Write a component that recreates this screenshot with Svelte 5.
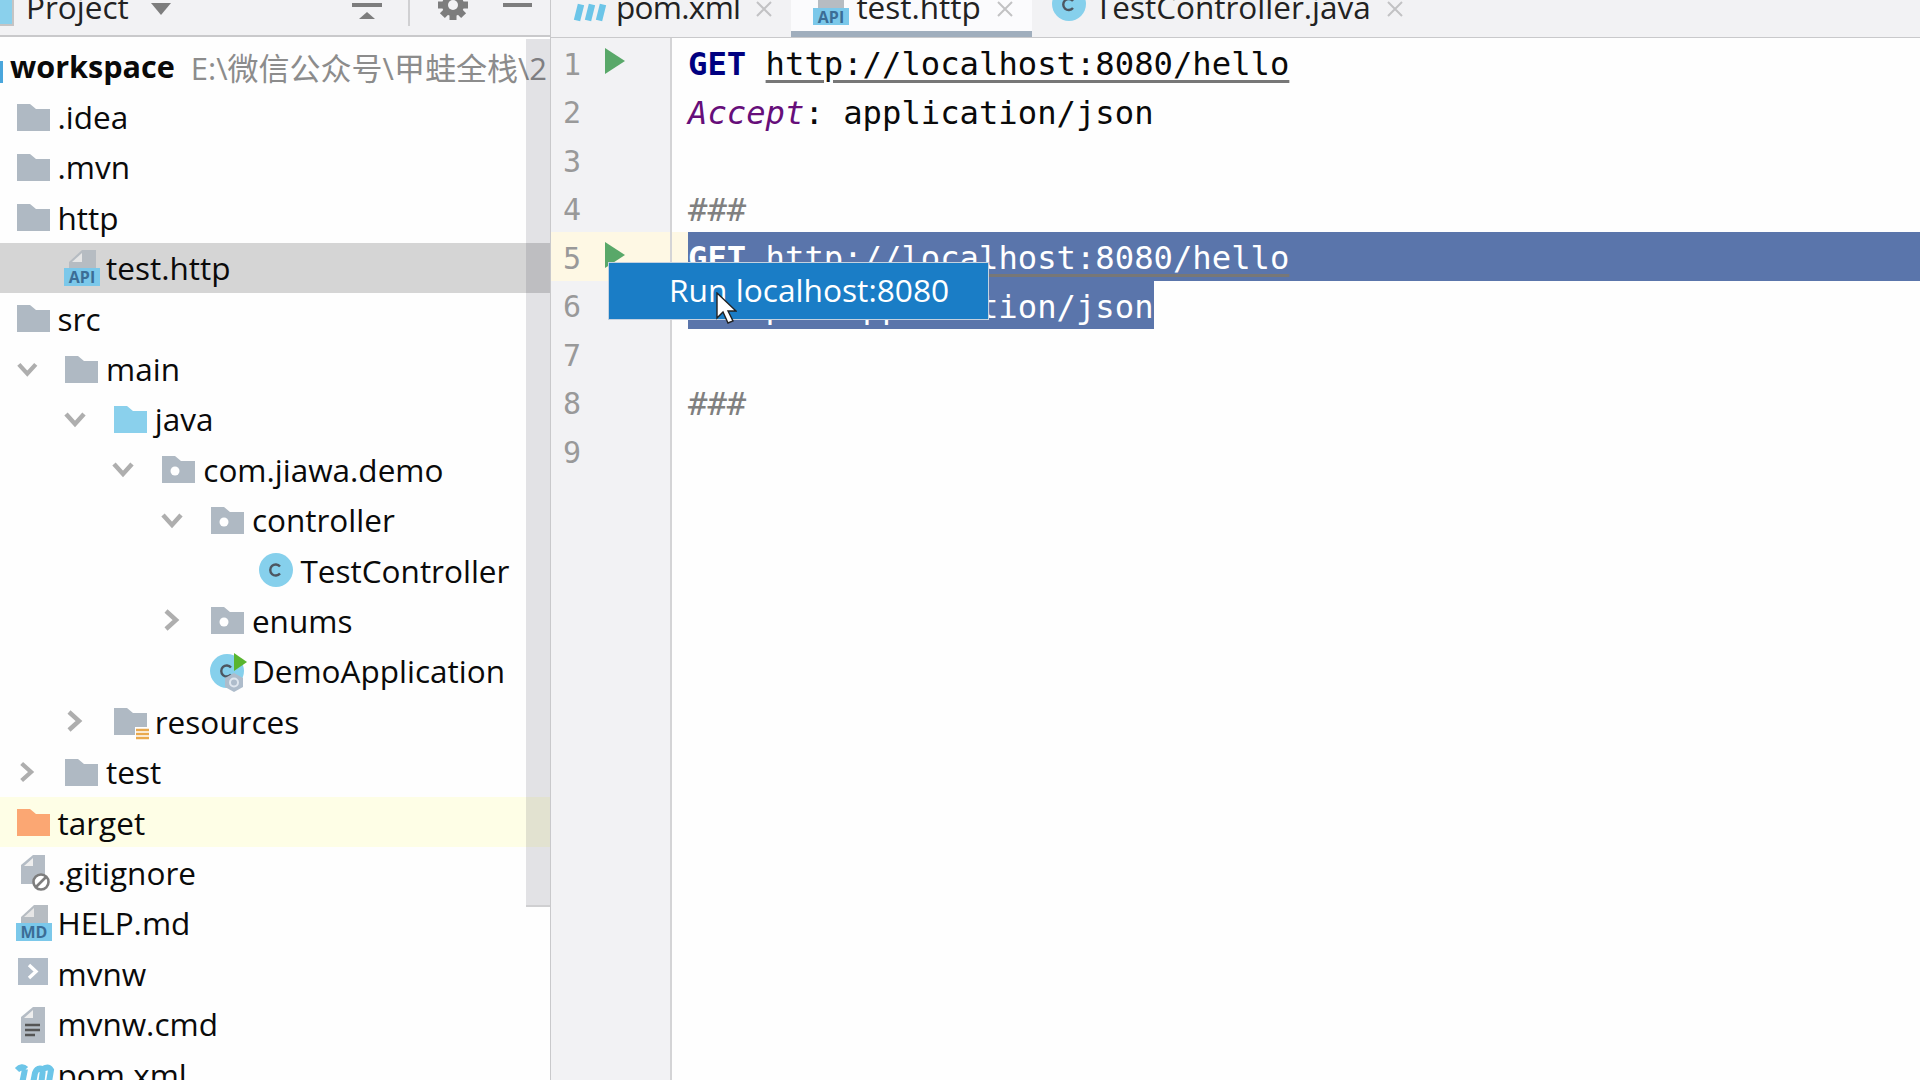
<script>
  // project tree, in display order
  const tree = [
    { name: '.idea', level: 0, icon: 'folder' },
    { name: '.mvn', level: 0, icon: 'folder' },
    { name: 'http', level: 0, icon: 'folder' },
    { name: 'test.http', level: 1, icon: 'api', selected: true },
    { name: 'src', level: 0, icon: 'folder' },
    { name: 'main', level: 1, icon: 'folder', arrow: 'down' },
    { name: 'java', level: 2, icon: 'source', arrow: 'down' },
    { name: 'com.jiawa.demo', level: 3, icon: 'package', arrow: 'down' },
    { name: 'controller', level: 4, icon: 'package', arrow: 'down' },
    { name: 'TestController', level: 5, icon: 'class' },
    { name: 'enums', level: 4, icon: 'package', arrow: 'right' },
    { name: 'DemoApplication', level: 4, icon: 'boot' },
    { name: 'resources', level: 2, icon: 'resources', arrow: 'right' },
    { name: 'test', level: 1, icon: 'folder', arrow: 'right' },
    { name: 'target', level: 0, icon: 'target', excluded: true },
    { name: '.gitignore', level: 0, icon: 'ignore' },
    { name: 'HELP.md', level: 0, icon: 'md' },
    { name: 'mvnw', level: 0, icon: 'shell' },
    { name: 'mvnw.cmd', level: 0, icon: 'text' },
    { name: 'pom.xml', level: 0, icon: 'maven' }
  ];

  const lineNumbers = [1, 2, 3, 4, 5, 6, 7, 8, 9];
  const teeth = [0, 45, 90, 135];
</script>

{#snippet fileIcon(kind)}
  <svg class="icon" viewBox="0 0 36 36">
    {#if kind === 'folder' || kind === 'source' || kind === 'target' || kind === 'package' || kind === 'resources'}
      <path
        d="M1 5h13l6 5h14v22H1z"
        fill={kind === 'source' ? '#8ad0ec' : kind === 'target' ? '#fba773' : '#afb9c3'}
      />
      {#if kind === 'package'}
        <circle cx="14" cy="20" r="4.5" fill="#fff" />
      {/if}
      {#if kind === 'resources'}
        <rect x="22" y="24" width="14" height="14" fill="#fff" />
        <path d="M23 27h13M23 31h13M23 35h13" stroke="#e9a94e" stroke-width="2.4" />
      {/if}
    {:else if kind === 'api' || kind === 'md'}
      <path d="M18 0h14v18H5V12z" fill="#b6bcc2" />
      <path d="M18 3v9H8z" fill="#e6e6e6" />
      <rect x="0" y="18" width="36" height="18" fill="#7bc8ea" />
      <text x="18" y="33" text-anchor="middle" class="badge">{kind === 'api' ? 'API' : 'MD'}</text>
    {:else if kind === 'class' || kind === 'boot'}
      <circle cx="17" cy="18" r="17" fill="#86d0ec" />
      <path d="M21 14.5a5.5 5.5 0 1 0 0 7" fill="none" stroke="#4d5660" stroke-width="2.4" />
      {#if kind === 'boot'}
        <path d="M24 0l13 9-13 9z" fill="#59b52f" />
        <path d="M15 25l9-5 9 5v9l-9 5-9-5z" fill="#aebccb" />
        <circle cx="24" cy="29.5" r="4" fill="none" stroke="#dfe6ee" stroke-width="2" />
      {/if}
    {:else if kind === 'ignore'}
      <path d="M17 1h12v29H5V11z" fill="#b4bcc5" />
      <path d="M17 4v8H8z" fill="#eee" />
      <circle cx="25" cy="28" r="7.5" fill="#fff" stroke="#7d7d7d" stroke-width="2.6" />
      <path d="M20 33l10-10" stroke="#7d7d7d" stroke-width="2.6" />
    {:else if kind === 'shell'}
      <rect x="2" y="3" width="30" height="27" fill="#b1bcc8" />
      <path d="M13 10l7 6.5-7 6.5" fill="none" stroke="#fff" stroke-width="3.4" />
    {:else if kind === 'text'}
      <path d="M17 1h12v36H5V11z" fill="#b4bcc5" />
      <path d="M17 4v8H8z" fill="#eee" />
      <path d="M9 19h15M9 24h15M9 29h10" stroke="#555" stroke-width="2.4" />
    {:else if kind === 'maven'}
      <path d="M4 38L9 13M15 38L19 17Q21 11 27 13L24 38M1 14Q6 9 10 13M26 14Q32 9 35 14L31 38" fill="none" stroke="#6cc5e8" stroke-width="6" />
    {/if}
  </svg>
{/snippet}

{#snippet closeIcon()}
  <svg class="close" viewBox="0 0 16 16"><path d="M1 1l14 14M15 1L1 15" stroke="#c2c2c4" stroke-width="2" /></svg>
{/snippet}

{#snippet runIcon()}
  <svg class="run" viewBox="0 0 20 26"><path d="M0 0l20 13L0 26z" fill="#59a869" /></svg>
{/snippet}

<div class="ide">
  <aside class="project">
    <header class="project-head">
      <span class="view-icon"></span>
      <span class="project-title">Project</span>
      <svg class="caret" viewBox="0 0 20 12"><path d="M0 0h20L10 12z" fill="#7d7d7d" /></svg>
      <svg class="collapse" viewBox="0 0 30 20"><path d="M0 3h30v4H0z" fill="#7d7d7d" /><path d="M7 19l8-7 8 7z" fill="#7d7d7d" /></svg>
      <span class="divider"></span>
      <svg class="gear" viewBox="0 0 30 30">
        {#each teeth as angle}
          <rect x="11.5" y="0" width="7" height="30" fill="#7d7d7d" transform="rotate({angle} 15 15)" />
        {/each}
        <circle cx="15" cy="15" r="11" fill="#7d7d7d" />
        <circle cx="15" cy="15" r="5" fill="#f2f2f4" />
      </svg>
      <span class="minimize"></span>
    </header>

    <div class="tree">
      <div class="row root">
        <span class="root-mark"></span>
        <b>workspace</b>
        <span class="path">E:\微信公众号\甲蛙全栈\2</span>
      </div>
      {#each tree as item}
        <div class="row" class:selected={item.selected} class:excluded={item.excluded}>
          <span class="indent" style="width: {item.level * 48.6}px">
            {#if item.arrow}
              <svg class="arrow" viewBox="0 0 24 24">
                {#if item.arrow === 'down'}
                  <path d="M3 7l9 10 9-10" />
                {:else}
                  <path d="M6 3l10 9-10 9" />
                {/if}
              </svg>
            {/if}
          </span>
          {@render fileIcon(item.icon)}
          <span class="label">{item.name}</span>
        </div>
      {/each}
      <div class="scrollbar"></div>
    </div>
  </aside>

  <main class="editor">
    <nav class="tabs">
      <div class="tab first">
        <svg class="tab-icon" viewBox="0 0 36 16"><path d="M4 16L8 0M15 16L19 0M26 16L30 0" stroke="#6cc5e8" stroke-width="6.5" /></svg>
        <span>pom.xml</span>
        {@render closeIcon()}
      </div>
      <div class="tab active">
        <svg class="tab-icon" viewBox="0 0 36 25">
          <rect x="5" y="0" width="26" height="8" fill="#b6bcc2" />
          <rect x="0" y="8" width="36" height="17" fill="#7bc8ea" />
          <text x="18" y="22.5" text-anchor="middle" class="badge">API</text>
        </svg>
        <span>test.http</span>
        {@render closeIcon()}
      </div>
      <div class="tab last">
        <svg class="tab-icon" viewBox="0 0 36 25">
          <circle cx="17" cy="4" r="17" fill="#86d0ec" />
          <path d="M21 1a5.5 5.5 0 1 0 0 7" fill="none" stroke="#4d5660" stroke-width="2.4" />
        </svg>
        <span>TestController.java</span>
        {@render closeIcon()}
      </div>
    </nav>

    <div class="body">
      <div class="gutter">
        {#each lineNumbers as n}
          <div class="gutter-row" class:current={n === 5}>
            <span class="num">{n}</span>
            {#if n === 1 || n === 5}
              {@render runIcon()}
            {/if}
          </div>
        {/each}
      </div>

      <div class="code">
        <div class="line"><b class="method">GET</b> <span class="url">http://localhost:8080/hello</span></div>
        <div class="line"><i class="header">Accept</i>: application/json</div>
        <div class="line"></div>
        <div class="line sep">###</div>
        <div class="line current">
          <span class="sel wide"><b>GET</b> <span class="url">http://localhost:8080/hello</span></span>
        </div>
        <div class="line"><span class="sel">Accept: application/json</span></div>
        <div class="line"></div>
        <div class="line sep">###</div>
        <div class="line"></div>
      </div>

      <div class="popup">Run localhost:8080</div>
      <svg class="pointer" viewBox="0 0 21 32">
        <path d="M1 1v25l6-6 5 11 5-2-5-10h8z" fill="#fff" stroke="#222" stroke-width="1.4" />
      </svg>
    </div>
  </main>
</div>

<style>
  :global(body) {
    margin: 0;
    background: #fefefe;
    overflow: hidden;
  }

  .ide {
    display: flex;
    width: 1920px;
    height: 1080px;
    overflow: hidden;
    font-family: "Open Sans", "Noto Sans", "Noto Sans CJK SC", sans-serif;
    font-size: 31.5px;
    color: #0a0a0a;
  }

  /* left panel */
  .project {
    flex: 0 0 551px;
    display: flex;
    flex-direction: column;
    border-right: 1px solid #c9c9cb;
    box-sizing: border-box;
  }
  .project-head {
    flex: 0 0 37px;
    box-sizing: border-box;
    display: flex;
    align-items: flex-start;
    overflow: hidden;
    background: #f2f2f4;
    border-bottom: 2px solid #c9c9cb;
  }
  .view-icon {
    flex: 0 0 14px;
    height: 26px;
    box-sizing: border-box;
    background: #8ad0ec;
    border: solid #c4c4c4;
    border-width: 0 2px 2px 0;
  }
  .project-title {
    margin: -13px 0 0 12px;
    line-height: 40px;
    color: #222;
  }
  .caret {
    width: 20px;
    height: 12px;
    margin: 3px 0 0 22px;
  }
  .collapse {
    width: 30px;
    height: 20px;
    margin: 0 0 0 181px;
  }
  .divider {
    width: 2px;
    height: 26px;
    margin-left: 26px;
    background: #d0d0d2;
  }
  .gear {
    width: 30px;
    height: 30px;
    margin: -10px 0 0 28px;
  }
  .minimize {
    width: 29px;
    height: 4px;
    margin: 3px 0 0 35px;
    background: #7d7d7d;
  }

  .tree {
    position: relative;
    flex: 1;
    padding-top: 4px;
    overflow: hidden;
  }
  .row {
    display: flex;
    align-items: center;
    height: 50.4px;
    padding-left: 15.5px;
    white-space: nowrap;
  }
  .selected {
    background: #d5d5d5;
  }
  .excluded {
    background: #fefee6;
  }
  .indent {
    display: flex;
    justify-content: flex-end;
    flex: none;
  }
  .arrow {
    width: 24px;
    height: 24px;
    margin-right: 26px;
    fill: none;
    stroke: #aeaeae;
    stroke-width: 4.5;
  }
  .icon {
    flex: 0 0 36px;
    width: 36px;
    height: 36px;
    margin-right: 6px;
    overflow: visible;
  }
  .badge {
    font-family: "Open Sans", sans-serif;
    font-size: 16px;
    font-weight: 700;
    fill: #3b6d96;
  }
  .root {
    position: relative;
    padding-left: 10px;
    overflow: hidden;
  }
  .root b {
    font-weight: 700;
    font-size: 30.6px;
  }
  .root-mark {
    position: absolute;
    left: 0;
    top: 20px;
    width: 3px;
    height: 22px;
    background: #4aa6dc;
  }
  .path {
    margin-left: 16px;
    color: #8c8c8c;
    font-size: 31px;
  }
  .scrollbar {
    position: absolute;
    top: 2px;
    left: 526px;
    width: 24px;
    height: 868px;
    box-sizing: border-box;
    background: rgba(40, 40, 60, 0.13);
    border-bottom: 2px solid #cfcfd1;
  }

  /* editor */
  .editor {
    flex: 1;
    display: flex;
    flex-direction: column;
    min-width: 0;
  }
  .tabs {
    flex: 0 0 38px;
    box-sizing: border-box;
    display: flex;
    align-items: flex-start;
    overflow: hidden;
    background: #f2f2f4;
    border-bottom: 1px solid #c9c9cb;
  }
  .tab {
    display: flex;
    align-items: flex-start;
    height: 38px;
    box-sizing: border-box;
    padding: 0 19px 0 22px;
    color: #222;
  }
  .tab span {
    margin: -13px 16px 0 7px;
    line-height: 40px;
  }
  .tab.first span {
    letter-spacing: -0.7px;
  }
  .tab.active {
    background: #fbfbfd;
    border-bottom: 7px solid #a0aebd;
  }
  .tab.last {
    padding-left: 20px;
  }
  .tab-icon {
    width: 36px;
    height: 25px;
    flex: none;
  }
  .close {
    width: 16px;
    height: 16px;
    margin-top: 1px;
    flex: none;
  }

  .body {
    position: relative;
    flex: 1;
    display: flex;
    background: #fefefe;
    font-family: "DejaVu Sans Mono", "Liberation Mono", monospace;
    font-size: 32.23px;
  }
  .gutter {
    flex: 0 0 119px;
    background: #f2f2f4;
    border-right: 2px solid #d4d4d6;
  }
  .gutter-row {
    position: relative;
    display: flex;
    align-items: center;
    height: 48.5px;
    padding-left: 12px;
  }
  .gutter-row.current {
    background: #fef8e4;
  }
  .num {
    width: 42px;
    margin-top: 4px;
    font-size: 30px;
    color: #999;
  }
  .run {
    width: 20px;
    height: 26px;
    margin: -2px 0 0 0;
  }
  .code {
    flex: 1;
    min-width: 0;
  }
  .line {
    height: 48.5px;
    line-height: 52px;
    padding-left: 16px;
    white-space: pre;
  }
  .line.current {
    display: flex;
    background: #fef8e4;
  }
  .sel {
    display: inline-block;
    height: 48.5px;
    background: #5a75ab;
    color: #fff;
  }
  .sel.wide {
    flex: 1;
  }
  .method {
    color: #000080;
  }
  .url {
    text-decoration: underline;
    text-decoration-color: #777;
    text-underline-offset: 5px;
  }
  .header {
    color: #660e7a;
  }
  .sep {
    color: #808080;
  }
  .popup {
    position: absolute;
    left: 57px;
    top: 224px;
    width: 381px;
    height: 58px;
    box-sizing: border-box;
    border: 1px solid #c4d2e0;
    background: #1a7dc6;
    color: #fff;
    font-family: "Open Sans", "Noto Sans", sans-serif;
    font-size: 31.7px;
    line-height: 54px;
    padding-left: 60px;
    white-space: nowrap;
  }
  .pointer {
    position: absolute;
    left: 165px;
    top: 254px;
    width: 21px;
    height: 32px;
  }
</style>
